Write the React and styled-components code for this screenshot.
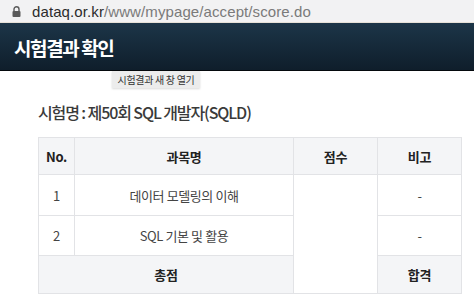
import React from "react";
import styled, { createGlobalStyle } from "styled-components";

const Global = createGlobalStyle`
  html, body { margin: 0; padding: 0; background: #fff; }
  body { width: 474px; height: 299px; overflow: hidden; font-family: "Noto Sans CJK KR", "Noto Sans", sans-serif; }
`;

const Page = styled.div`
  position: relative;
  width: 474px;
  height: 299px;
  overflow: hidden;
`;

const UrlBar = styled.div`
  height: 23px;
  background: #f2f2f3;
  display: flex;
  align-items: center;
  padding-left: 12px;
  gap: 11px;
  box-sizing: border-box;
  border-bottom: 1px solid #e6e1d8;
`;

const UrlText = styled.div`
  font-family: "Liberation Sans", Arial, sans-serif;
  font-size: 15px;
  color: #7a7a7a;
  letter-spacing: 0.1px;
  line-height: 1;
  padding-top: 1px;
`;

const Host = styled.span`
  color: #2b2b2b;
`;

const Header = styled.div`
  height: 48px;
  background: linear-gradient(#1c3548, #0f1e2b);
  border-bottom: 1px solid #05090d;
  box-sizing: border-box;
  display: flex;
  align-items: center;
  padding-left: 14px;
`;

const HeaderTitle = styled.h1`
  margin: 0;
  color: #fff;
  font-size: 19px;
  font-weight: 700;
  letter-spacing: -1.4px;
  padding-top: 2px;
`;

const Tooltip = styled.div`
  position: absolute;
  left: 112px;
  top: 71px;
  width: 88px;
  height: 17px;
  background: #ececec;
  box-shadow: 0 1px 2px rgba(0, 0, 0, 0.15);
  font-size: 10px;
  color: #333;
  display: flex;
  align-items: center;
  justify-content: center;
  letter-spacing: -0.3px;
`;

const Content = styled.div`
  padding: 30px 0 0 38px;
`;

const ExamTitle = styled.h2`
  margin: 0;
  font-size: 16px;
  font-weight: 500;
  color: #3a3a3a;
  letter-spacing: -1.1px;
  line-height: 22px;
`;

const Table = styled.table`
  margin-top: 14px;
  border-collapse: collapse;
  width: 423px;
  table-layout: fixed;
  font-size: 13px;
  color: #444;
`;

const Th = styled.th`
  background: #f4f5f7;
  border: 1px solid #e2e3e6;
  font-weight: 700;
  color: #222;
  height: ${(p) => p.$h || 36}px;
  padding: 0;
  text-align: center;
  letter-spacing: -0.3px;
  box-sizing: border-box;
`;

const Td = styled.td`
  background: #fff;
  border: 1px solid #e2e3e6;
  height: ${(p) => p.$h || 40}px;
  padding: 0;
  text-align: center;
  letter-spacing: -0.4px;
  box-sizing: border-box;
`;

const Lock = () => (
  <svg width="9" height="11" viewBox="0 0 9 11">
    <path d="M2 5V3.3a2.5 2.5 0 0 1 5 0V5" fill="none" stroke="#5a5a5a" strokeWidth="1.4" />
    <rect x="0.5" y="5" width="8" height="6" rx="1" fill="#5a5a5a" />
  </svg>
);

export default function App() {
  return (
    <Page>
      <Global />
      <UrlBar>
        <Lock />
        <UrlText>
          <Host>dataq.or.kr</Host>/www/mypage/accept/score.do
        </UrlText>
      </UrlBar>
      <Header>
        <HeaderTitle>시험결과 확인</HeaderTitle>
      </Header>
      <Tooltip>시험결과 새 창 열기</Tooltip>
      <Content>
        <ExamTitle>시험명 : 제50회 SQL 개발자(SQLD)</ExamTitle>
        <Table>
          <colgroup>
            <col style={{ width: 36 }} />
            <col style={{ width: 219 }} />
            <col style={{ width: 84 }} />
            <col style={{ width: 84 }} />
          </colgroup>
          <thead>
            <tr>
              <Th $h={37}>No.</Th>
              <Th $h={37}>과목명</Th>
              <Th $h={37}>점수</Th>
              <Th $h={37}>비고</Th>
            </tr>
          </thead>
          <tbody>
            <tr>
              <Td $h={41}>1</Td>
              <Td $h={41}>데이터 모델링의 이해</Td>
              <Td rowSpan={3}></Td>
              <Td $h={41}>-</Td>
            </tr>
            <tr>
              <Td $h={40}>2</Td>
              <Td $h={40}>SQL 기본 및 활용</Td>
              <Td $h={40}>-</Td>
            </tr>
            <tr>
              <Th colSpan={2} $h={38}>총점</Th>
              <Th $h={38}>합격</Th>
            </tr>
          </tbody>
        </Table>
      </Content>
    </Page>
  );
}
